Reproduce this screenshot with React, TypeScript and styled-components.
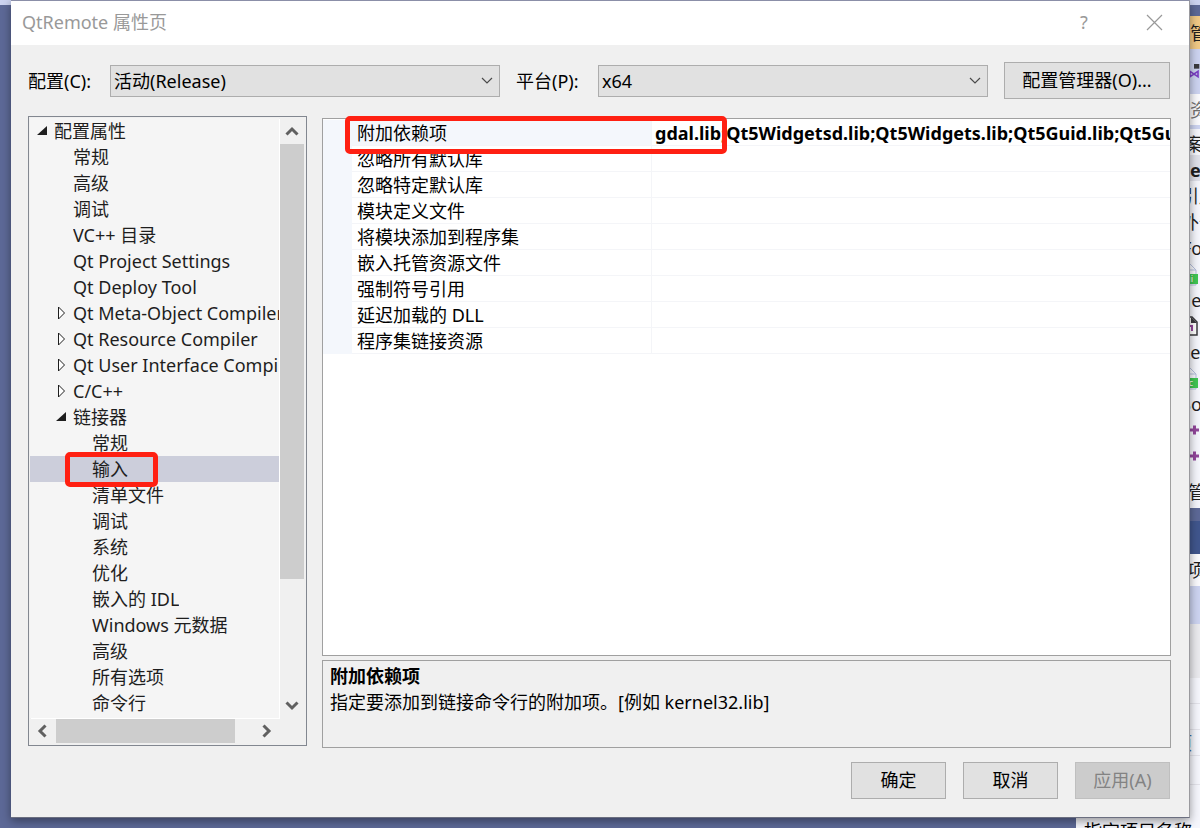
import React from "react";
import styled, { createGlobalStyle, css } from "styled-components";

const GlobalStyle = createGlobalStyle`
  *, *::before, *::after { box-sizing: border-box; }
  body {
    margin: 0;
    font-family: "Noto Sans", "Noto Sans CJK SC", sans-serif;
    font-size: 18px;
    line-height: 26px;
    color: #000;
  }
  button, select, input { font: inherit; color: inherit; }
`;

/* ---------- IDE window behind the dialog ---------- */

const Desktop = styled.div`
  position: relative;
  min-height: 100vh;
  overflow: hidden;
  background: #5d6997;
  display: flex;
`;

const Backdrop = styled.div`
  position: absolute;
  inset: 0;
  display: flex;
  flex-direction: column;
`;

const MenuStrip = styled.div`
  height: 5px;
  flex: none;
  background: #ccd3f0;
`;

const Dock = styled.aside`
  flex: 1;
  min-height: 0;
  width: 124px;
  align-self: flex-end;
  padding-top: 11px;
  overflow: hidden;
  white-space: nowrap;
`;

type StripProps = { $h: number; $bg: string; $pad?: number; $color?: string; $line?: boolean };

const Strip = styled.div<StripProps>`
  display: flex;
  align-items: center;
  height: ${(p) => p.$h}px;
  padding-left: ${(p) => p.$pad ?? 0}px;
  background: ${(p) => p.$bg};
  color: ${(p) => p.$color ?? "#1e1e1e"};
  border-bottom: ${(p) => (p.$line ? "1px solid #e3e3ea" : "0")};
`;

const SolutionItem = styled.div<{ $pad: number; $active?: boolean }>`
  display: flex;
  align-items: center;
  height: 26px;
  padding: 4px 0 0 ${(p) => p.$pad}px;
  background: ${(p) => (p.$active ? "#dfe0e9" : "#f5f6fc")};
  color: #1e1e1e;
  font-weight: ${(p) => (p.$active ? 700 : 400)};
`;

const BottomHint = styled.span`
  align-self: flex-end;
`;

/* ---------- dialog frame ---------- */

const Dialog = styled.main`
  position: relative;
  flex: 1;
  min-width: 0;
  margin: 0 10px 10px 11px;
  display: flex;
  flex-direction: column;
  background: #f0f0f0;
  border-top: 1px solid #8b8fa8;
  border-right: 1px solid #9a9a9e;
  border-bottom: 1px solid #6b6f80;
  box-shadow: 0 3px 9px rgba(0, 0, 0, 0.4);
`;

const TitleBar = styled.header`
  display: flex;
  align-items: center;
  height: 44px;
  padding: 0 15px 2px 11px;
  background: #fff;
  color: #999;
`;

const Title = styled.h1`
  flex: 1;
  margin: 0;
  font-size: 18px;
  font-weight: 400;
`;

const CaptionButton = styled.button`
  width: 40px;
  height: 40px;
  margin-left: 30px;
  padding: 0;
  border: 0;
  background: none;
  display: grid;
  place-items: center;
`;

const Toolbar = styled.div`
  display: flex;
  align-items: center;
  height: 71px;
  padding: 0 19px 0 17px;
`;

const FieldLabel = styled.label`
  width: 82px;
  flex: none;
`;

const Combo = styled.div`
  position: relative;
  flex: 1;
  margin-right: 16px;
`;

const ComboSelect = styled.select`
  appearance: none;
  display: block;
  width: 100%;
  height: 32px;
  padding: 0 30px 0 3px;
  border: 1px solid #adadad;
  border-radius: 0;
  background: #e1e1e1;
`;

const ComboArrow = styled.svg`
  position: absolute;
  right: 7px;
  top: 11px;
  pointer-events: none;
`;

const PushButton = styled.button<{ $wide?: boolean }>`
  width: ${(p) => (p.$wide ? 166 : 95)}px;
  height: 37px;
  flex: none;
  padding: 0 0 2px;
  border: 1px solid #adadad;
  background: #e1e1e1;
  &:disabled {
    background: #ccc;
    border-color: #bfbfbf;
    color: #838383;
  }
`;

const Body = styled.div`
  flex: 1;
  display: flex;
  gap: 15px;
  padding: 0 18px 0 17px;
`;

/* ---------- tree ---------- */

const TreePane = styled.nav`
  width: 279px;
  height: 630px;
  flex: none;
  display: grid;
  grid-template-columns: minmax(0, 1fr) 24px;
  grid-template-rows: minmax(0, 1fr) 24px;
  gap: 1px;
  padding: 1px 2px 2px 1px;
  border: 1px solid #828790;
  background: #f0f0f0;
`;

const Tree = styled.ul`
  margin: 0;
  padding: 0;
  list-style: none;
  background: #f5f5f5;
  box-shadow: 1px 1px 0 #fff;
  color: #1e1e1e;
`;

const TreeRow = styled.li<{ $level: number; $selected?: boolean }>`
  position: relative;
  display: flex;
  align-items: center;
  height: 26px;
  padding-left: ${(p) => 7 + p.$level * 19}px;
  background: ${(p) => (p.$selected ? "#cccedb" : "transparent")};
`;

const Expander = styled.span`
  width: 14px;
  height: 14px;
  flex: none;
  margin-right: 3px;
  display: flex;
`;

const TreeText = styled.span`
  overflow: hidden;
  white-space: nowrap;
`;

const callout = css`
  position: absolute;
  border: 5px solid #ff2012;
  border-radius: 5px;
  pointer-events: none;
`;

const TreeCallout = styled.span`
  ${callout}
  z-index: 1;
  left: 35px;
  top: -4px;
  width: 93px;
  height: 35px;
`;

const ScrollTrack = styled.div<{ $horizontal?: boolean }>`
  display: flex;
  flex-direction: ${(p) => (p.$horizontal ? "row" : "column")};
`;

const ScrollArrow = styled.button<{ $horizontal?: boolean }>`
  width: ${(p) => (p.$horizontal ? 26 : 24)}px;
  height: ${(p) => (p.$horizontal ? 24 : 26)}px;
  flex: none;
  padding: 0;
  border: 0;
  background: none;
  display: grid;
  place-items: center;
`;

const ScrollThumb = styled.div<{ $share: number }>`
  flex: ${(p) => p.$share} 0 0;
  background: #cdcdcd;
`;

const ScrollRest = styled.div<{ $share: number }>`
  flex: ${(p) => p.$share} 0 0;
`;

/* ---------- property grid ---------- */

const Details = styled.section`
  flex: 1;
  min-width: 0;
  display: flex;
  flex-direction: column;
  gap: 4px;
  padding-top: 2px;
`;

const GridPane = styled.div`
  position: relative;
  height: 538px;
  padding-top: 1px;
  border: 1px solid #a0a0a0;
  background: #fff;
`;

const PropertyTable = styled.table`
  width: 100%;
  table-layout: fixed;
  border-collapse: separate;
  border-spacing: 0;
  td, th {
    height: 26px;
    padding: 2px 0 0;
    font-weight: 400;
    text-align: left;
    line-height: 23px;
    white-space: nowrap;
    overflow: hidden;
    border-bottom: 1px solid #f4f5f8;
  }
`;

const Gutter = styled.td`
  width: 29px;
  && { background: #f4f7fc; border-color: #f4f7fc; }
`;

const PropertyName = styled.th<{ $selected?: boolean }>`
  width: 300px;
  background: ${(p) => (p.$selected ? "#f4f7fc" : "#fff")};
  && { padding-left: 5px; border-right: 1px solid #f4f5f8; }
`;

const PropertyValue = styled.td`
  && { padding-left: 3px; font-weight: 700; }
`;

const GridCallout = styled.div`
  ${callout}
  left: 22px;
  top: -3px;
  width: 382px;
  height: 38px;
`;

const Description = styled.div`
  height: 88px;
  padding: 2px 7px;
  border: 1px solid #a0a0a0;
`;

const DescriptionTitle = styled.h2`
  margin: 0;
  font-size: 18px;
  font-weight: 700;
`;

const DescriptionText = styled.p`
  margin: 0;
`;

const Footer = styled.footer`
  display: flex;
  justify-content: flex-end;
  gap: 17px;
  padding: 14px 19px 18px;
`;

/* ---------- data ---------- */

type Node = { text: string; level: number; state?: "open" | "closed"; selected?: boolean };

const NODES: Node[] = [
  { text: "配置属性", level: 0, state: "open" },
  { text: "常规", level: 1 },
  { text: "高级", level: 1 },
  { text: "调试", level: 1 },
  { text: "VC++ 目录", level: 1 },
  { text: "Qt Project Settings", level: 1 },
  { text: "Qt Deploy Tool", level: 1 },
  { text: "Qt Meta-Object Compiler", level: 1, state: "closed" },
  { text: "Qt Resource Compiler", level: 1, state: "closed" },
  { text: "Qt User Interface Compiler", level: 1, state: "closed" },
  { text: "C/C++", level: 1, state: "closed" },
  { text: "链接器", level: 1, state: "open" },
  { text: "常规", level: 2 },
  { text: "输入", level: 2, selected: true },
  { text: "清单文件", level: 2 },
  { text: "调试", level: 2 },
  { text: "系统", level: 2 },
  { text: "优化", level: 2 },
  { text: "嵌入的 IDL", level: 2 },
  { text: "Windows 元数据", level: 2 },
  { text: "高级", level: 2 },
  { text: "所有选项", level: 2 },
  { text: "命令行", level: 2 },
];

const PROPERTIES: [string, string][] = [
  ["附加依赖项", "gdal.lib;Qt5Widgetsd.lib;Qt5Widgets.lib;Qt5Guid.lib;Qt5Gui.lib"],
  ["忽略所有默认库", ""],
  ["忽略特定默认库", ""],
  ["模块定义文件", ""],
  ["将模块添加到程序集", ""],
  ["嵌入托管资源文件", ""],
  ["强制符号引用", ""],
  ["延迟加载的 DLL", ""],
  ["程序集链接资源", ""],
];

/* ---------- icons ---------- */

const ExpanderIcon = ({ state }: { state: "open" | "closed" }) => (
  <svg width="14" height="14" viewBox="0 0 14 14" aria-hidden="true">
    {state === "open" ? (
      <path d="M10 2v9H0z" fill="#1e1e1e" />
    ) : (
      <path d="M2.500 1v12l6-6z" fill="#fff" stroke="#1e1e1e" />
    )}
  </svg>
);

const ARROWS = {
  up: "M1.500 10.500L7 5l5.500 5.500",
  down: "M1.500 4.500L7 10l5.500-5.500",
  left: "M9.500 1.500L4 7l5.500 5.500",
  right: "M4.500 1.500L10 7l-5.500 5.500",
};

const ArrowIcon = ({ dir }: { dir: keyof typeof ARROWS }) => (
  <svg width="14" height="14" viewBox="0 0 14 14" aria-hidden="true">
    <path d={ARROWS[dir]} fill="none" stroke="#606060" strokeWidth="3" />
  </svg>
);

const FileIcon = ({ tag }: { tag: string }) => (
  <svg width="22" height="26" viewBox="0 0 22 26" aria-hidden="true">
    <path d="M4 2h9l7 7v15H4z" fill="#f7f8fd" stroke="#b5bfdc" />
    <path d="M13 2v7h7" fill="none" stroke="#b5bfdc" />
    <rect y="13" width="22" height="10" fill="#3fc653" />
    <text x="17" y="21" fontSize="9" textAnchor="end" fill="#fff">{tag}</text>
  </svg>
);

const ResourceIcon = () => (
  <svg width="18" height="20" viewBox="0 0 18 20" aria-hidden="true">
    <path d="M2 1h10l5 5v13H2z" fill="#fff" stroke="#3a3a3e" strokeWidth="1.500" />
    <path d="M11 1v6h6z" fill="#3a3a3e" />
    <path d="M5 10h7v5" fill="none" stroke="#92479b" strokeWidth="2" />
  </svg>
);

const PlusPlusIcon = () => (
  <svg width="22" height="12" viewBox="0 0 22 12" aria-hidden="true">
    <path d="M1 6h9M5.500 1.500v9M12 6h9M16.500 1.500v9" stroke="#92479b" strokeWidth="3" />
  </svg>
);

const StudioIcon = () => (
  <svg width="18" height="26" viewBox="0 0 18 26" aria-hidden="true">
    <path d="M9 1h8v7H9z" fill="#3a3a3e" />
    <path d="M3 12l12 8v-8L3 20z" fill="none" stroke="#7b3fc4" strokeWidth="2.500" />
  </svg>
);

const Combobox = ({ id, value }: { id: string; value: string }) => (
  <Combo>
    <ComboSelect id={id} defaultValue={value}>
      <option>{value}</option>
    </ComboSelect>
    <ComboArrow width="12" height="9" viewBox="0 0 12 9" aria-hidden="true">
      <path d="M1 2l5 5 5-5" fill="none" stroke="#4a4a4a" strokeWidth="1.200" />
    </ComboArrow>
  </Combo>
);

const IdeBackdrop = () => (
  <Backdrop aria-hidden="true">
    <MenuStrip />
    <Dock>
      <Strip $h={33} $bg="#f1c985" $pad={114}>管理器</Strip>
      <Strip $h={45} $bg="#ccd3f0" $pad={112}><StudioIcon /></Strip>
      <Strip $h={31} $bg="#fafafd" $pad={114} $color="#717171">资源管理器</Strip>
      <Strip $h={4} $bg="#ccd3f0" />
      <SolutionItem $pad={109}>案“QtRemote”</SolutionItem>
      <SolutionItem $pad={114} $active>emote</SolutionItem>
      <SolutionItem $pad={105}>引用</SolutionItem>
      <SolutionItem $pad={105}>外部依赖项</SolutionItem>
      <SolutionItem $pad={106}>Form Files</SolutionItem>
      <SolutionItem $pad={100}><FileIcon tag="ui" /></SolutionItem>
      <SolutionItem $pad={102}>Header Files</SolutionItem>
      <SolutionItem $pad={104}><ResourceIcon /></SolutionItem>
      <SolutionItem $pad={103}>Resource Files</SolutionItem>
      <SolutionItem $pad={100}><FileIcon tag="qrc" /></SolutionItem>
      <SolutionItem $pad={105}>Source Files</SolutionItem>
      <SolutionItem $pad={102}><PlusPlusIcon /></SolutionItem>
      <SolutionItem $pad={102}><PlusPlusIcon /></SolutionItem>
      <Strip $h={9} $bg="#f5f6fc" />
      <Strip $h={32} $bg="#f5f6fc" $pad={112}>管理器</Strip>
      <Strip $h={13} $bg="#5d6997" />
      <Strip $h={33} $bg="#40568d" />
      <Strip $h={32} $bg="#fafafd" $pad={111}>项目</Strip>
      <Strip $h={38} $bg="#ccd3f0" />
      <Strip $h={54} $bg="#eaeaee" />
      <Strip $h={26} $bg="#f5f6fc" $line />
      <Strip $h={26} $bg="#f5f6fc" $line />
      <Strip $h={26} $bg="#f5f6fc" $pad={98} $color="#3c6ea5" $line>项</Strip>
      <Strip $h={29} $bg="#f5f6fc" $line />
      <Strip $h={59} $bg="#f5f6fc" $pad={8} $color="#000">
        <BottomHint>指定项目名称。</BottomHint>
      </Strip>
    </Dock>
  </Backdrop>
);

export default function App() {
  return (
    <Desktop>
      <GlobalStyle />
      <IdeBackdrop />
      <Dialog role="dialog" aria-labelledby="dialog-title" lang="zh-CN">
        <TitleBar>
          <Title id="dialog-title">QtRemote 属性页</Title>
          <CaptionButton aria-label="帮助">?</CaptionButton>
          <CaptionButton aria-label="关闭">
            <svg width="17" height="17" viewBox="0 0 17 17" aria-hidden="true">
              <path d="M1 1l15 15M16 1L1 16" stroke="#999" strokeWidth="1.200" />
            </svg>
          </CaptionButton>
        </TitleBar>

        <Toolbar>
          <FieldLabel htmlFor="configuration">配置(C):</FieldLabel>
          <Combobox id="configuration" value="活动(Release)" />
          <FieldLabel htmlFor="platform">平台(P):</FieldLabel>
          <Combobox id="platform" value="x64" />
          <PushButton $wide>配置管理器(O)...</PushButton>
        </Toolbar>

        <Body>
          <TreePane aria-label="配置属性">
            <Tree>
              {NODES.map((n, i) => (
                <TreeRow key={i} $level={n.level} $selected={n.selected}>
                  <Expander>{n.state && <ExpanderIcon state={n.state} />}</Expander>
                  <TreeText>{n.text}</TreeText>
                  {n.selected && <TreeCallout />}
                </TreeRow>
              ))}
            </Tree>
            <ScrollTrack>
              <ScrollArrow aria-label="向上滚动"><ArrowIcon dir="up" /></ScrollArrow>
              <ScrollThumb $share={435} />
              <ScrollRest $share={113} />
              <ScrollArrow aria-label="向下滚动"><ArrowIcon dir="down" /></ScrollArrow>
            </ScrollTrack>
            <ScrollTrack $horizontal>
              <ScrollArrow $horizontal aria-label="向左滚动"><ArrowIcon dir="left" /></ScrollArrow>
              <ScrollThumb $share={179} />
              <ScrollRest $share={18} />
              <ScrollArrow $horizontal aria-label="向右滚动"><ArrowIcon dir="right" /></ScrollArrow>
            </ScrollTrack>
          </TreePane>

          <Details>
            <GridPane>
              <PropertyTable>
                <tbody>
                  {PROPERTIES.map(([name, value], i) => (
                    <tr key={name}>
                      <Gutter />
                      <PropertyName scope="row" $selected={i === 0}>{name}</PropertyName>
                      <PropertyValue>{value}</PropertyValue>
                    </tr>
                  ))}
                </tbody>
              </PropertyTable>
              <GridCallout />
            </GridPane>
            <Description>
              <DescriptionTitle>附加依赖项</DescriptionTitle>
              <DescriptionText>指定要添加到链接命令行的附加项。[例如 kernel32.lib]</DescriptionText>
            </Description>
          </Details>
        </Body>

        <Footer>
          <PushButton>确定</PushButton>
          <PushButton>取消</PushButton>
          <PushButton disabled>应用(A)</PushButton>
        </Footer>
      </Dialog>
    </Desktop>
  );
}
